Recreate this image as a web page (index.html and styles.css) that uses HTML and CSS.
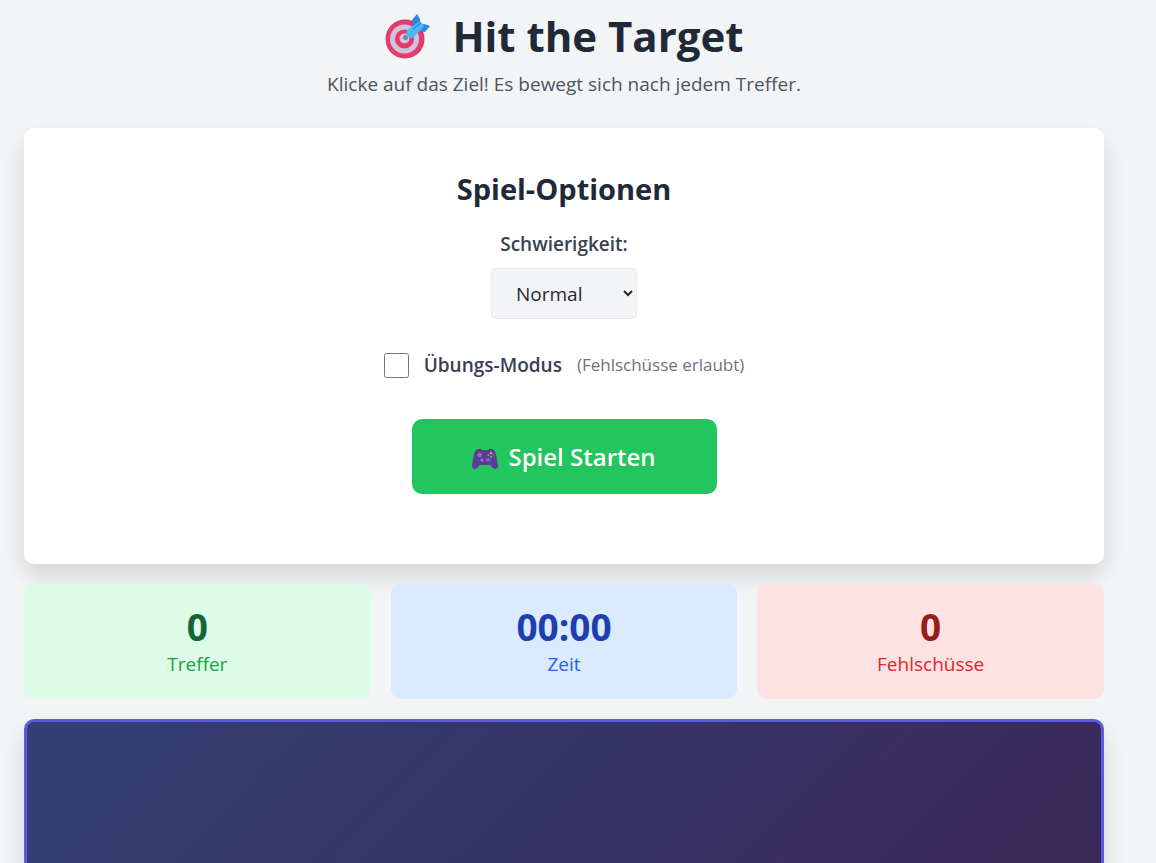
FILE: index.html
```html
<!DOCTYPE html>
<html lang="de">
<head>
    <meta charset="UTF-8">
    <meta name="viewport" content="width=device-width, initial-scale=1.0">
    <title>Hit the Target</title>
    <link rel="stylesheet" href="styles.css">
</head>
<body>
    <div class="container">
        <header class="header">
            <h1>
                <svg class="target-icon" viewBox="0 0 46 46" aria-hidden="true">
                    <circle cx="21" cy="26" r="19.5" fill="#c93a6c"/>
                    <circle cx="20.5" cy="26.5" r="18.5" fill="#e63c6c"/>
                    <circle cx="20.5" cy="26" r="14.5" fill="#cfc3de"/>
                    <circle cx="20.5" cy="26" r="9.5" fill="#e63b68"/>
                    <circle cx="20.5" cy="25.5" r="5" fill="#cfc3de"/>
                    <circle cx="21.5" cy="24.5" r="2.5" fill="#8b7f9f"/>
                    <path d="M29 14l-1-7 5-6 3 5 0 6zM33 18l8 1 5-6-6-2-6 1z" fill="#2e86e4"/>
                    <path d="M23 17l13-9 4 5-10 11q-3 2-6 0-3-3-1-7z" fill="#4db9f2"/>
                    <path d="M29 16l8-6" stroke="#2e86e4" stroke-width="1.5"/>
                </svg>
                <span>Hit the Target</span>
            </h1>
            <p>Klicke auf das Ziel! Es bewegt sich nach jedem Treffer.</p>
        </header>

        <section class="options">
            <h2>Spiel-Optionen</h2>
            <div class="difficulty">
                <label for="difficulty">Schwierigkeit:</label>
                <select id="difficulty">
                    <option value="easy">Einfach</option>
                    <option value="normal" selected>Normal</option>
                    <option value="hard">Schwer</option>
                </select>
            </div>
            <div class="practice">
                <input type="checkbox" id="practiceMode">
                <label for="practiceMode">Übungs-Modus</label>
                <span class="hint">(Fehlschüsse erlaubt)</span>
            </div>
            <button class="start-button" type="button">
                <svg class="gamepad-icon" viewBox="0 0 26 22" aria-hidden="true">
                    <path d="M4 4q0-3 3-3h2l2 3zM22 4q0-3-3-3h-2l-2 3z" fill="#34424a"/>
                    <path d="M5 2h16q2 0 3 4l2 11q0 4-3 4-2 0-4-3l-1-1H8l-1 1q-2 3-4 3-3 0-3-4L2 6q1-4 3-4z" fill="#5d3c94"/>
                    <circle cx="7.5" cy="7" r="2.2" fill="#8370c8"/>
                    <circle cx="16" cy="12" r="1.8" fill="#8370c8"/>
                    <path d="M8 12h4M10 10v4" stroke="#8e7bd6" stroke-width="1.2"/>
                    <circle cx="19" cy="5" r="1.1" fill="#f8c93a"/>
                    <circle cx="21.5" cy="7" r="1.1" fill="#f03a4c"/>
                    <circle cx="16.5" cy="7" r="1.1" fill="#41a5ef"/>
                    <circle cx="19" cy="9" r="1.1" fill="#39c98c"/>
                </svg>
                Spiel Starten
            </button>
        </section>

        <section class="stats">
            <div class="stat hits">
                <div class="value">0</div>
                <div class="name">Treffer</div>
            </div>
            <div class="stat time">
                <div class="value">00:00</div>
                <div class="name">Zeit</div>
            </div>
            <div class="stat misses">
                <div class="value">0</div>
                <div class="name">Fehlschüsse</div>
            </div>
        </section>

        <div class="game-area"></div>
    </div>
</body>
</html>
```

FILE: styles.css
```css
* {
    box-sizing: border-box;
}

body {
    margin: 0;
    background-color: #f3f4f6;
    color: #1f2937;
    font-family: 'Open Sans', 'Noto Sans', sans-serif;
    font-size: 19px;
    line-height: 30px;
}

h1, h2, p {
    margin: 0;
}

.container {
    margin: 0 52px 0 24px;
    padding: 11px 0 20px;
}

.header {
    text-align: center;
    margin-bottom: 29px;
}

.header h1 {
    display: flex;
    justify-content: center;
    align-items: center;
    gap: 22px;
    margin-bottom: 8px;
    font-size: 42px;
    line-height: 50px;
}

.target-icon {
    width: 46px;
    height: 46px;
}

.header p {
    color: #4b5563;
}

.options {
    display: flex;
    flex-direction: column;
    align-items: center;
    padding: 41px 40px 70px;
    background-color: white;
    border-radius: 10px;
    box-shadow: 0 12px 24px -2px rgba(0, 0, 0, 0.15);
}

.options h2 {
    margin-bottom: 20px;
    font-size: 29px;
    line-height: 40px;
}

.options label {
    color: #374151;
    font-weight: 600;
}

.difficulty {
    display: flex;
    flex-direction: column;
    align-items: center;
    gap: 9px;
    margin-bottom: 31px;
}

.difficulty label {
    line-height: 30px;
}

.difficulty select {
    width: 146px;
    height: 51px;
    padding: 0 0 0 20px;
    background-color: #f3f4f6;
    color: #1f2937;
    border: 1px solid #e5e7eb;
    border-radius: 5px;
    font: inherit;
}

.practice {
    display: flex;
    align-items: center;
    gap: 15px;
    margin-bottom: 39px;
}

.practice input {
    width: 25px;
    height: 25px;
    margin: 0;
}

.hint {
    color: #6b7280;
    font-size: 17px;
}

.start-button {
    display: flex;
    justify-content: center;
    align-items: center;
    gap: 10px;
    width: 305px;
    height: 75px;
    border: none;
    border-radius: 10px;
    background-color: #22c55e;
    color: white;
    font-family: inherit;
    font-size: 24px;
    font-weight: 600;
    cursor: pointer;
}

.start-button:hover {
    background-color: #16a34a;
}

.gamepad-icon {
    width: 26px;
    height: 22px;
    margin-top: 4px;
}

.stats {
    display: grid;
    grid-template-columns: repeat(3, 1fr);
    gap: 20px;
    margin: 20px 0;
}

.stat {
    padding: 20px;
    border-radius: 10px;
    text-align: center;
}

.value {
    font-size: 37px;
    font-weight: 700;
    line-height: 45px;
}

.hits {
    background-color: #dcfce7;
    color: #16a34a;
}

.hits .value {
    color: #166534;
}

.time {
    background-color: #dbeafe;
    color: #2563eb;
}

.time .value {
    color: #1e40af;
}

.misses {
    background-color: #fee2e2;
    color: #dc2626;
}

.misses .value {
    color: #991b1b;
}

.game-area {
    height: 500px;
    border: 3px solid #5b5bdf;
    border-radius: 10px;
    background: linear-gradient(135deg, #334075, #392d5e 62%, #3a2650);
    box-shadow: 0 12px 24px -2px rgba(0, 0, 0, 0.15);
}
```
